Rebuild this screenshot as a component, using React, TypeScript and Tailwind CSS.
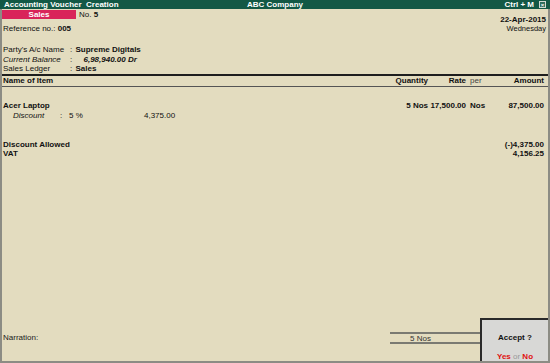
import { FC } from 'react';

const Bar: FC = () => (
  <div className="h-[9px] bg-[#135845] text-white font-bold flex items-center px-[4px] text-[8px] leading-[9px]">
    <div className="flex-1">Accounting Voucher&nbsp; Creation</div>
    <div className="flex-1 text-center">ABC Company</div>
    <div className="flex-1 flex justify-end items-center gap-[5px]">
      <span>Ctrl + M</span>
      <span className="w-[7px] h-[7px] border border-[#cfd8d3] bg-[#2c6b5a] flex items-center justify-center text-[6px] leading-none">
        ×
      </span>
    </div>
  </div>
);

const App: FC = () => {
  return (
    <div className="w-[550px] h-[363px] bg-[#e3dcbf] text-[#111] font-['Liberation_Sans',Arial,sans-serif] text-[8px] leading-[9px] flex flex-col overflow-hidden">
      <Bar />
      <div className="flex-1 flex flex-col border-l-2 border-l-[#8c8c84] border-r-2 border-r-[#8c8c84] border-b-2 border-b-[#8c8c84]">
        {/* header */}
        <div className="flex pt-[1px] pr-[2px]">
          <div className="flex flex-col">
            <div className="flex items-center gap-[3px]">
              <div className="w-[74px] h-[9px] bg-[#d9245a] text-white font-bold text-center">Sales</div>
              <span>
                No. <b>5</b>
              </span>
            </div>
            <div className="mt-[5px] pl-[1px]">
              Reference no.: <b>005</b>
            </div>
          </div>
          <div className="flex-1 flex flex-col items-end pt-[5px]">
            <b>22-Apr-2015</b>
            <span className="text-[7.5px]">Wednesday</span>
          </div>
        </div>

        {/* party */}
        <div className="mt-[12px] pl-[1px] grid grid-cols-[67px_auto] leading-[9.5px]">
          <span>Party's A/c Name</span>
          <span>
            : <b className="ml-[1px]">Supreme Digitals</b>
          </span>
          <span className="italic">Current Balance</span>
          <span>
            : <b className="italic ml-[9px]">6,98,940.00 Dr</b>
          </span>
          <span>Sales Ledger</span>
          <span>
            : <b className="ml-[1px]">Sales</b>
          </span>
        </div>

        {/* table header */}
        <div className="border-t-2 border-t-[#1e1e1e] border-b border-b-[#555] flex font-bold h-[13px] items-center pl-[1px] pr-[4px]">
          <div className="flex-1">Name of Item</div>
          <div className="w-[40px] text-right">Quantity</div>
          <div className="w-[38px] text-right">Rate</div>
          <div className="w-[33px] pl-[4px] font-normal text-[#444]">per</div>
          <div className="w-[45px] text-right">Amount</div>
        </div>

        {/* items */}
        <div className="mt-[14px] flex font-bold pl-[1px] pr-[4px]">
          <div className="flex-1">Acer Laptop</div>
          <div className="w-[40px] text-right">5 Nos</div>
          <div className="w-[38px] text-right">17,500.00</div>
          <div className="w-[33px] pl-[4px]">Nos</div>
          <div className="w-[45px] text-right">87,500.00</div>
        </div>
        <div className="mt-[1px] flex pl-[11px]">
          <span className="w-[47px] italic">Discount</span>
          <span className="w-[9px]">:</span>
          <span className="w-[75px]">5 %</span>
          <span>4,375.00</span>
        </div>

        <div className="mt-[20px] flex font-bold pl-[1px] pr-[4px]">
          <div className="flex-1">Discount Allowed</div>
          <div className="text-right">(-)4,375.00</div>
        </div>
        <div className="flex font-bold pl-[1px] pr-[4px]">
          <div className="flex-1">VAT</div>
          <div className="text-right">4,156.25</div>
        </div>

        {/* footer */}
        <div className="mt-auto flex items-end">
          <div className="flex-1 pl-[1px] pb-[19px] text-[#222]">Narration:</div>
          <div className="w-[90px] mb-[17px] border-t-2 border-t-[#7a7a72] border-b-2 border-b-[#7a7a72] h-[12px] flex items-center pl-[20px] text-[#333]">
            5 Nos
          </div>
          <div className="w-[68px] h-[43px] bg-[#d8d8d6] border-2 border-[#2a2a2a] border-r-0 border-b-0 flex flex-col items-center">
            <b className="mt-[13px]">Accept ?</b>
            <div className="mt-[10px] font-bold text-[#e01010]">
              Yes <span className="font-normal text-[#999]">or</span> No
            </div>
          </div>
        </div>
      </div>
    </div>
  );
};

export default App;
